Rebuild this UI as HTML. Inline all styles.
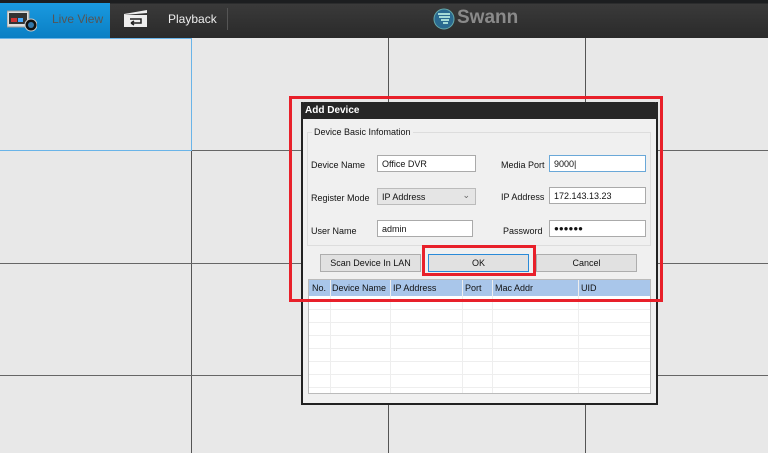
<!DOCTYPE html>
<html><head><meta charset="utf-8"><style>
*{margin:0;padding:0;box-sizing:border-box}
body{width:768px;height:453px;overflow:hidden;background:#e8e8e8;font-family:"Liberation Sans",sans-serif;position:relative}
.a{position:absolute}
.hdr{left:0;top:0;width:768px;height:38px;background:linear-gradient(#1c1e20 0,#1c1e20 3px,#3a3a3a 4px,#2a2a2a 38px)}
.tab{left:0;top:3px;width:110px;height:35px;background:linear-gradient(#1a9ae0,#0a7fc4)}
.vl{background:#555;width:1px}
.hl{background:#666;height:1px}
.lbl{font-size:9px;color:#111}
.inp{background:#fff;border:1px solid #aaa;font-size:9px;padding:3px 4px;height:17px;color:#111}
.btn{background:#e1e1e1;border:1px solid #adadad;font-size:9px;text-align:center;line-height:16px;height:18px;color:#111}
.th{font-size:9px;color:#111;top:283px}
</style></head><body>
<div class="a hdr"></div>
<div class="a tab"></div>
<svg class="a" style="left:7px;top:10px" width="30" height="22" viewBox="0 0 30 22">
<rect x="0" y="1" width="22" height="16" fill="#ddd" stroke="#999"/><rect x="2" y="3" width="18" height="11" fill="#333"/><rect x="4" y="8" width="6" height="4" fill="#c33"/><rect x="11" y="8" width="5" height="4" fill="#4af"/>
<circle cx="24" cy="15" r="6" fill="#111" stroke="#ccc"/><circle cx="24" cy="15" r="3" fill="#37a"/></svg>
<div class="a" style="left:52px;top:12px;font-size:12px;color:#555">Live View</div>
<svg class="a" style="left:123px;top:10px" width="25" height="18" viewBox="0 0 25 18">
<rect x="1" y="5" width="23" height="12" fill="#eee"/><path d="M1 4 L24 0 L24 3 L1 5Z" fill="#eee"/><path d="M7 9 H18 V13 H8 M8 13 l3-2 M8 13 l3 2" stroke="#222" stroke-width="1.5" fill="none"/></svg>
<div class="a" style="left:168px;top:12px;font-size:12px;color:#eee">Playback</div>
<div class="a" style="left:227px;top:8px;width:1px;height:22px;background:#555"></div>
<svg class="a" style="left:433px;top:8px" width="22" height="22" viewBox="0 0 22 22"><circle cx="11" cy="11" r="10" fill="#2a6a90" stroke="#6aa" stroke-width="1"/><path d="M5 6 H17 M6 9 H17 M8 12 H16 M10 15 H15" stroke="#cfe" stroke-width="1.5"/></svg>
<div class="a" style="left:457px;top:7px;font-size:19px;font-weight:bold;color:#8a8a8a">Swann</div>

<div class="a vl" style="left:191px;top:38px;height:415px"></div>
<div class="a vl" style="left:388px;top:38px;height:415px"></div>
<div class="a vl" style="left:585px;top:38px;height:415px"></div>
<div class="a hl" style="left:0;top:263px;width:768px"></div>
<div class="a hl" style="left:0;top:375px;width:768px"></div>
<div class="a hl" style="left:191px;top:150px;width:577px"></div>
<div class="a" style="left:0;top:38px;width:192px;height:113px;border:1px solid #6ab4e8;border-left:none"></div>

<div class="a" style="left:301px;top:102px;width:357px;height:303px;background:#f0f0f0;border:2px solid #222;border-top:none"></div>
<div class="a" style="left:301px;top:102px;width:357px;height:17px;background:#262626;border-radius:3px 3px 0 0"></div>
<div class="a" style="left:305px;top:105px;font-size:10px;font-weight:bold;color:#fff">Add Device</div>
<div class="a" style="left:307px;top:132px;width:344px;height:114px;border:1px solid #ddd"></div>
<div class="a lbl" style="left:312px;top:127px;background:#f0f0f0;padding:0 2px">Device Basic Infomation</div>
<div class="a lbl" style="left:311px;top:160px">Device Name</div>
<div class="a lbl" style="left:311px;top:193px">Register Mode</div>
<div class="a lbl" style="left:311px;top:226px">User Name</div>
<div class="a lbl" style="left:501px;top:160px">Media Port</div>
<div class="a lbl" style="left:501px;top:192px">IP Address</div>
<div class="a lbl" style="left:503px;top:226px">Password</div>
<div class="a inp" style="left:377px;top:155px;width:99px">Office DVR</div>
<div class="a inp" style="left:377px;top:188px;width:99px;background:#e5e5e5;border-color:#bbb">IP Address<span style="position:absolute;right:5px;top:1px;color:#666">&#8964;</span></div>
<div class="a inp" style="left:377px;top:220px;width:96px">admin</div>
<div class="a inp" style="left:549px;top:155px;width:97px;border-color:#6aa8d8">9000|</div>
<div class="a inp" style="left:549px;top:187px;width:97px">172.143.13.23</div>
<div class="a inp" style="left:549px;top:220px;width:97px;font-size:8px">&#9679;&#9679;&#9679;&#9679;&#9679;&#9679;</div>
<div class="a btn" style="left:320px;top:254px;width:101px">Scan Device In LAN</div>
<div class="a btn" style="left:428px;top:254px;width:101px;border-color:#2a8ad8">OK</div>
<div class="a btn" style="left:536px;top:254px;width:101px">Cancel</div>
<div class="a" style="left:308px;top:279px;width:343px;height:115px;background:#fff;border:1px solid #bbb;background-image:repeating-linear-gradient(#fff 0,#fff 12px,#eee 12px,#eee 13px);background-position:0 17px"></div>
<div class="a" style="left:309px;top:280px;width:341px;height:16px;background:#a9c6ea"></div>
<div class="a" style="left:330px;top:280px;width:1px;height:113px;background:#eee"></div>
<div class="a" style="left:390px;top:280px;width:1px;height:113px;background:#eee"></div>
<div class="a" style="left:462px;top:280px;width:1px;height:113px;background:#eee"></div>
<div class="a" style="left:492px;top:280px;width:1px;height:113px;background:#eee"></div>
<div class="a" style="left:578px;top:280px;width:1px;height:113px;background:#eee"></div>
<div class="a th" style="left:312px">No.</div>
<div class="a th" style="left:332px">Device Name</div>
<div class="a th" style="left:393px">IP Address</div>
<div class="a th" style="left:465px">Port</div>
<div class="a th" style="left:495px">Mac Addr</div>
<div class="a th" style="left:581px">UID</div>

<div class="a" style="left:289px;top:96px;width:374px;height:206px;border:3px solid #e8202a"></div>
<div class="a" style="left:422px;top:245px;width:114px;height:31px;border:3px solid #e8202a"></div>
</body></html>
